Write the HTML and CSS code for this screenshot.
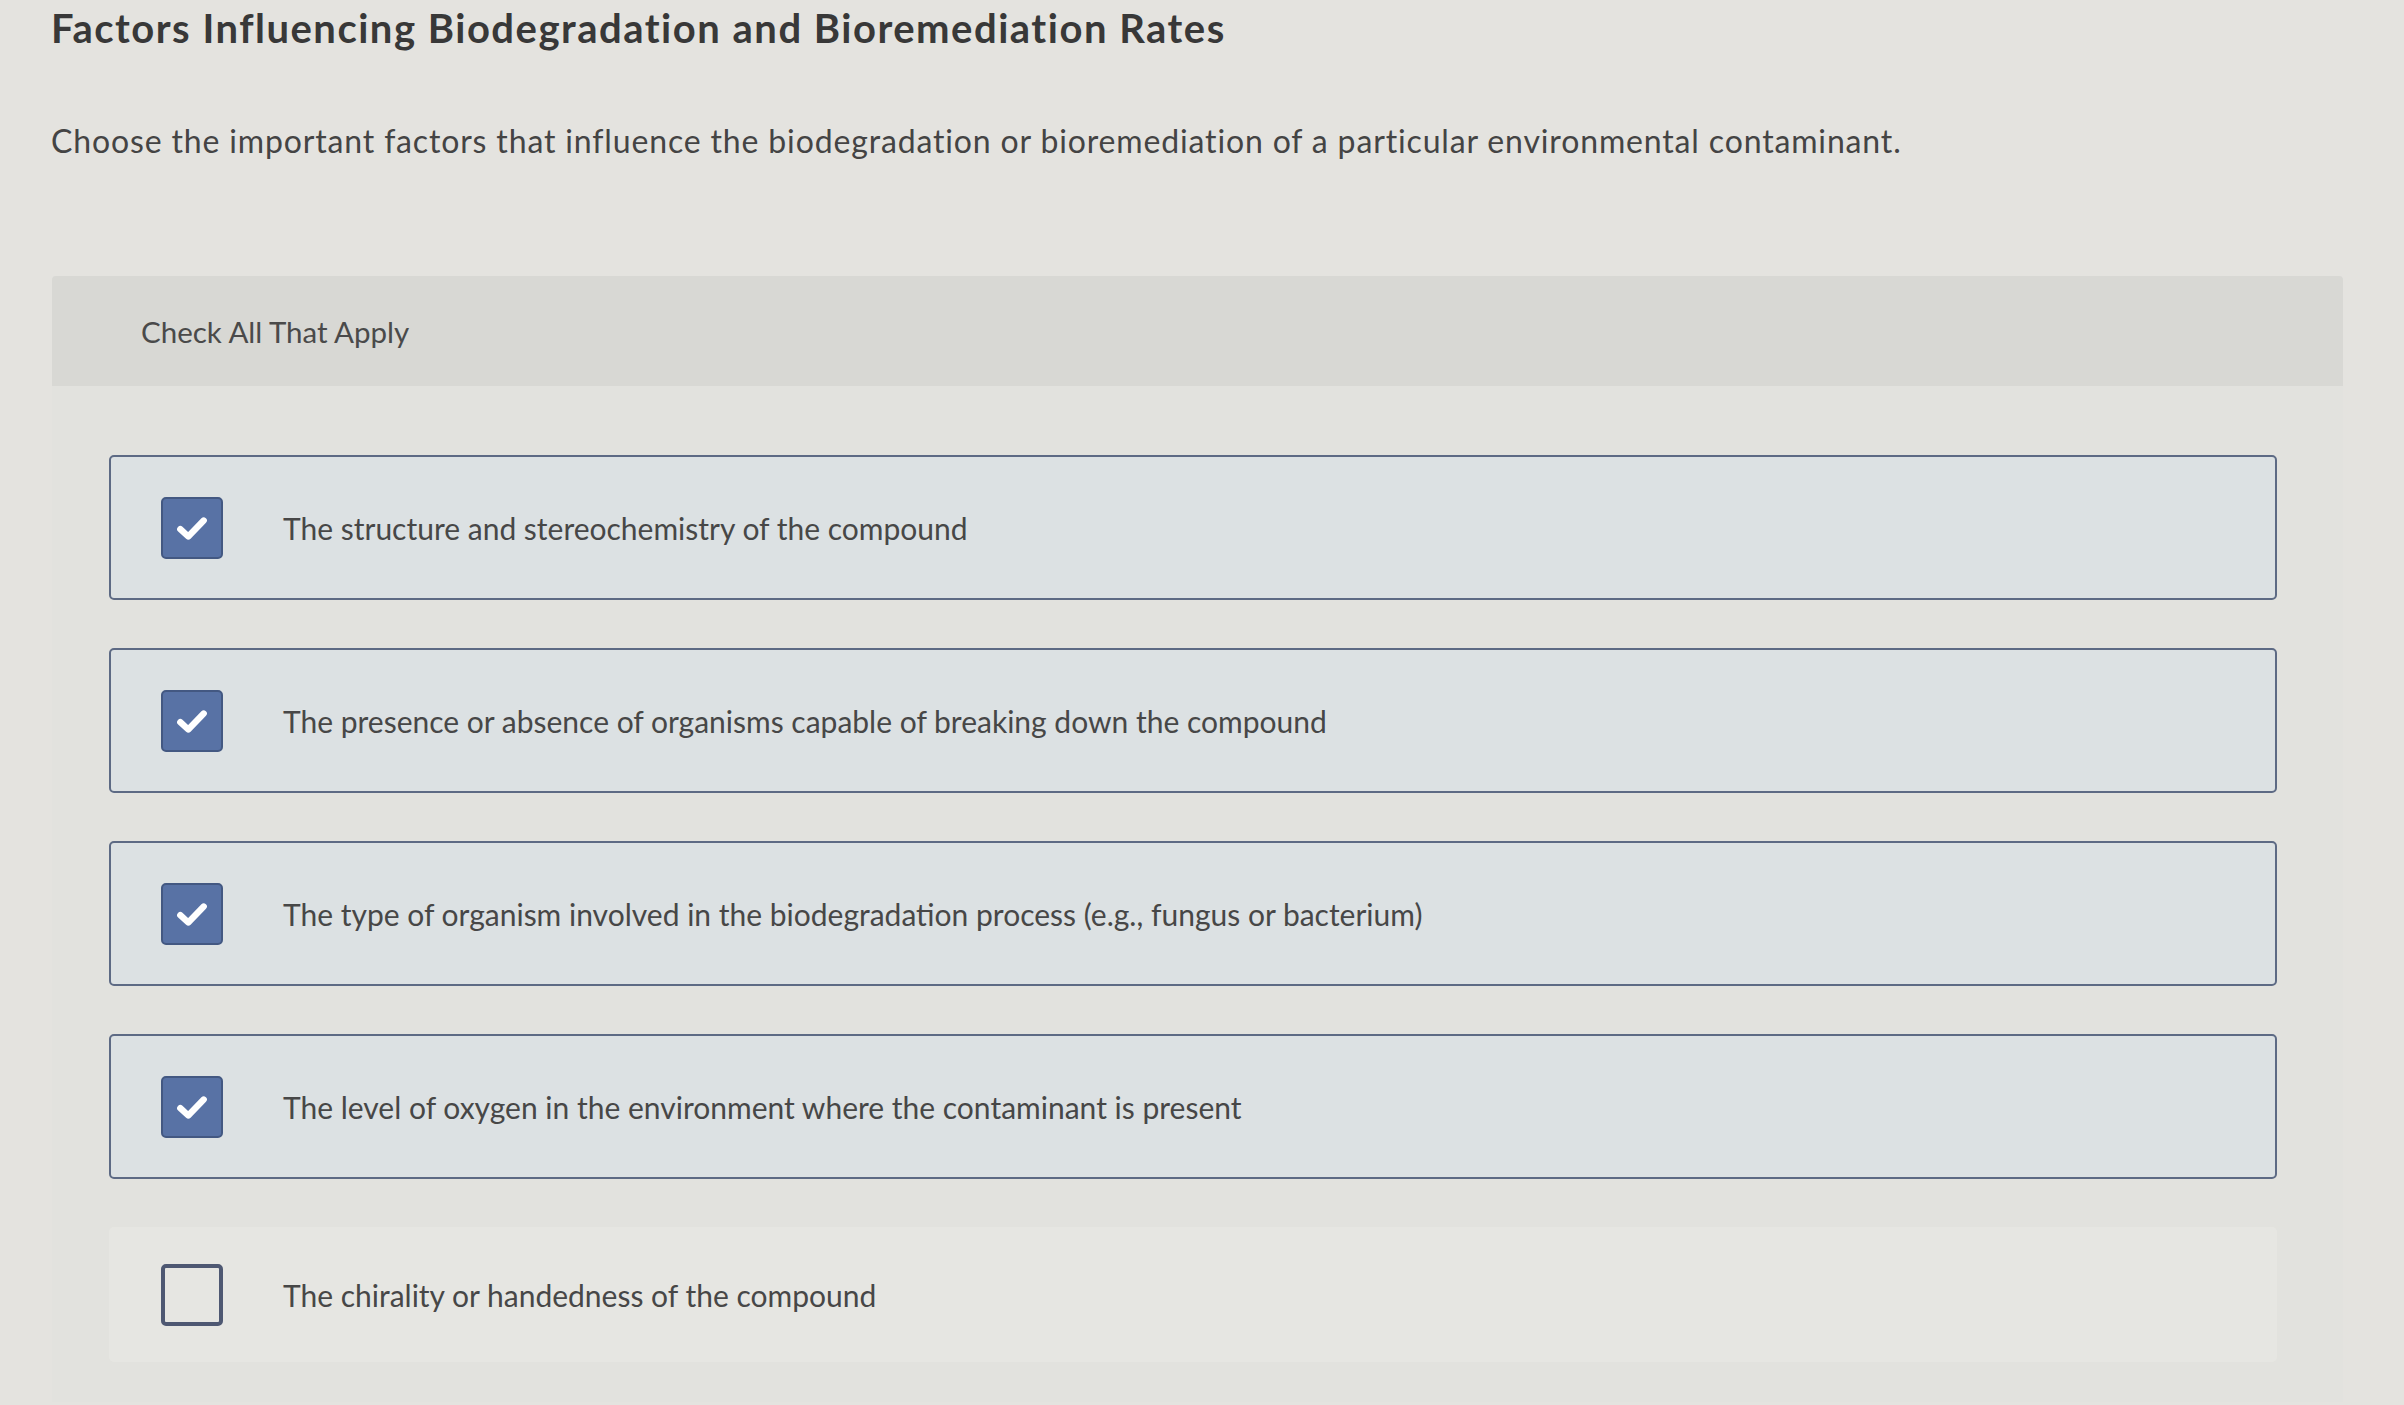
FILE: index.html
```html
<!DOCTYPE html>
<html lang="en">
<head>
<meta charset="utf-8">
<title>Factors Influencing Biodegradation and Bioremediation Rates</title>
<link rel="stylesheet" href="styles.css">
</head>
<body>
<main class="page">
  <h1 class="title">Factors Influencing Biodegradation and Bioremediation Rates</h1>
  <p class="prompt">Choose the important factors that influence the biodegradation or bioremediation of a particular environmental contaminant.</p>
  <section class="panel">
    <div class="panel-head">Check All That Apply</div>
    <div class="panel-body">
      <label class="option is-checked">
        <span class="box"><svg viewBox="0 0 32 26" class="tick"><path d="M5 14 L12.5 21 L27 6" /></svg></span>
        <span class="label">The structure and stereochemistry of the compound</span>
      </label>
      <label class="option is-checked">
        <span class="box"><svg viewBox="0 0 32 26" class="tick"><path d="M5 14 L12.5 21 L27 6" /></svg></span>
        <span class="label">The presence or absence of organisms capable of breaking down the compound</span>
      </label>
      <label class="option is-checked">
        <span class="box"><svg viewBox="0 0 32 26" class="tick"><path d="M5 14 L12.5 21 L27 6" /></svg></span>
        <span class="label">The type of organism involved in the biodegradation process (e.g., fungus or bacterium)</span>
      </label>
      <label class="option is-checked">
        <span class="box"><svg viewBox="0 0 32 26" class="tick"><path d="M5 14 L12.5 21 L27 6" /></svg></span>
        <span class="label">The level of oxygen in the environment where the contaminant is present</span>
      </label>
      <label class="option">
        <span class="box"></span>
        <span class="label">The chirality or handedness of the compound</span>
      </label>
    </div>
  </section>
</main>
</body>
</html>
```
FILE: styles.css
```css
html, body {
  margin: 0;
  padding: 0;
  background: #e4e3df;
  height: 100%;
  overflow: hidden;
}
.page {
  padding: 6px 0 0 51px;
  font-family: Lato, "Liberation Sans", sans-serif;
  color: #3f3f3f;
}
.title {
  margin: 0;
  font-size: 40px;
  line-height: 44px;
  font-weight: 700;
  letter-spacing: 1.5px;
  color: #383838;
}
.prompt {
  margin: 69px 0 0 0;
  font-size: 32px;
  line-height: 44px;
  letter-spacing: 0.85px;
  color: #444;
}
.panel {
  margin: 113px 0 0 1px;
  width: 2291px;
  background: #e2e2de;
  border-radius: 4px 4px 0 0;
}
.panel-head {
  height: 110px;
  display: flex;
  align-items: center;
  padding-left: 89px;
  background: #d8d8d4;
  font-size: 29.5px;
  color: #4a4a4a;
  border-radius: 4px 4px 0 0;
}
.panel-body {
  padding: 69px 66px 40px 57px;
  display: flex;
  flex-direction: column;
  gap: 48px;
}
.option {
  height: 145px;
  box-sizing: border-box;
  display: flex;
  align-items: center;
  padding-left: 50px;
  border: 2px solid transparent;
  border-radius: 5px;
  background: #e6e6e2;
}
.option:last-child {
  height: 135px;
}
.option.is-checked {
  background: #dce1e3;
  border-color: #5d6a84;
}
.box {
  width: 62px;
  height: 62px;
  box-sizing: border-box;
  border: 4px solid #4e5872;
  border-radius: 5px;
  flex: none;
  display: flex;
  align-items: center;
  justify-content: center;
}
.is-checked .box {
  background: #5872a5;
  border: 2px solid #435882;
}
.tick {
  width: 34px;
  height: 28px;
}
.tick path {
  fill: none;
  stroke: #fff;
  stroke-width: 6;
  stroke-linecap: round;
  stroke-linejoin: round;
}
.label {
  margin-left: 60px;
  font-size: 30px;
  color: #474747;
}
```
